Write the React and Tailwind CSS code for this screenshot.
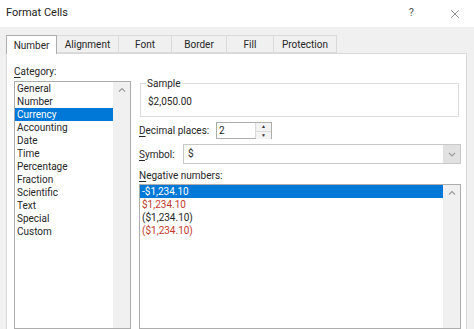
import { X } from "lucide-react";

const categories = [
  "General",
  "Number",
  "Currency",
  "Accounting",
  "Date",
  "Time",
  "Percentage",
  "Fraction",
  "Scientific",
  "Text",
  "Special",
  "Custom",
];

const negatives = [
  { label: "-$1,234.10", red: false, selected: true },
  { label: "$1,234.10", red: true },
  { label: "($1,234.10)", red: false },
  { label: "($1,234.10)", red: true },
];

const tabs = ["Number", "Alignment", "Font", "Border", "Fill", "Protection"];
const tabWidths = ["w-[51px]", "w-[62px]", "w-[53px]", "w-[55px]", "w-[47px]", "w-[63px]"];

function Chevron({ up = true }) {
  return (
    <svg width="8" height="5" viewBox="0 0 8 5" className="text-[#9a9a9a]">
      <path
        d={up ? "M1 4.5 L4 1.5 L7 4.5" : "M1 1 L4 4 L7 1"}
        fill="none"
        stroke="currentColor"
        strokeWidth="1.1"
      />
    </svg>
  );
}

function Scrollbar() {
  return (
    <div className="flex w-[17px] shrink-0 justify-center bg-[#f0f0f0] pt-[5px]">
      <Chevron />
    </div>
  );
}

export default function App() {
  return (
    <div
      className="flex h-[329px] w-[474px] flex-col overflow-hidden bg-[#f0f0f0] text-[10px] text-[#262626]"
      style={{ fontFamily: 'Roboto, "Noto Sans", sans-serif' }}
    >
      {/* title bar */}
      <div className="flex h-[27px] shrink-0 items-center bg-white pl-[6px] pr-[12px]">
        <span className="text-[11px] text-[#222]">Format Cells</span>
        <span className="ml-auto mr-[34px] text-[11px] text-[#555]">?</span>
        <X size={14} strokeWidth={1} className="text-[#444]" />
      </div>

      {/* tabs */}
      <div className="flex h-[26px] shrink-0 items-end pl-[6px]">
        {tabs.map((t, i) => (
          <div
            key={t}
            className={
              i === 0
                ? `${tabWidths[i]} relative z-10 -mb-px flex h-[19px] items-center justify-center border border-b-0 border-[#adadad] bg-white`
                : `${tabWidths[i]} flex h-[18px] items-center justify-center border-y border-r border-[#dadada] bg-[#f0f0f0]`
            }
          >
            {t}
          </div>
        ))}
      </div>

      {/* panel */}
      <div className="ml-[6px] mr-[7px] flex min-h-0 flex-1 gap-[8px] border border-b-0 border-[#d9d9d9] bg-white pl-[7px] pr-[5px] pt-[11px]">
        {/* category column */}
        <div className="flex w-[117px] shrink-0 flex-col">
          <div className="h-[14px] leading-[14px]">
            <span className="underline underline-offset-2">C</span>ategory:
          </div>
          <div className="mt-[2px] flex flex-1 border border-[#adadad]">
            <div className="flex-1">
              {categories.map((c) => (
                <div
                  key={c}
                  className={`h-[13px] pl-[2px] leading-[13px] ${
                    c === "Currency" ? "bg-[#0078d7] text-white" : ""
                  }`}
                >
                  {c}
                </div>
              ))}
            </div>
            <Scrollbar />
          </div>
        </div>

        {/* right column */}
        <div className="flex min-w-0 flex-1 flex-col">
          <fieldset className="mt-[12px] ml-px mr-[2px] h-[40px] shrink-0 border border-[#dcdcdc] px-[5px]">
            <legend className="px-[1px] leading-[13px]">Sample</legend>
            <div className="mt-[4px] pl-[2px]">$2,050.00</div>
          </fieldset>

          <div className="mt-[5px] flex h-[17px] shrink-0 items-center">
            <span className="w-[77px]">
              <span className="underline underline-offset-2">D</span>ecimal places:
            </span>
            <div className="flex h-[17px] w-[56px] border border-[#adadad]">
              <div className="flex-1 pl-[2px] leading-[15px]">2</div>
              <div className="flex w-[16px] flex-col border-l border-[#dadada]">
                <div className="flex flex-1 items-center justify-center border-b border-[#dadada] bg-[#f3f3f3] text-[5px] text-[#333]">
                  ▲
                </div>
                <div className="flex flex-1 items-center justify-center bg-[#f3f3f3] text-[5px] text-[#333]">
                  ▼
                </div>
              </div>
            </div>
          </div>

          <div className="mt-[5px] flex h-[20px] shrink-0 items-center">
            <span className="w-[44px]">
              <span className="underline underline-offset-2">S</span>ymbol:
            </span>
            <div className="flex h-[20px] flex-1 border border-[#c8c8c8]">
              <div className="flex-1 pl-[4px] leading-[18px]">$</div>
              <div className="flex w-[17px] items-center justify-center bg-[#e1e1e1]">
                <Chevron up={false} />
              </div>
            </div>
          </div>

          <div className="mt-[5px] h-[14px] shrink-0 leading-[14px]">
            <span className="underline underline-offset-2">N</span>egative numbers:
          </div>
          <div className="mt-[1px] flex flex-1 border border-[#adadad]">
            <div className="flex-1">
              {negatives.map((n, i) => (
                <div
                  key={i}
                  className={`h-[13px] pl-[2px] leading-[13px] ${
                    n.selected ? "bg-[#0078d7] text-white" : n.red ? "text-[#c0392b]" : ""
                  }`}
                >
                  {n.label}
                </div>
              ))}
            </div>
            <Scrollbar />
          </div>
        </div>
      </div>
    </div>
  );
}
